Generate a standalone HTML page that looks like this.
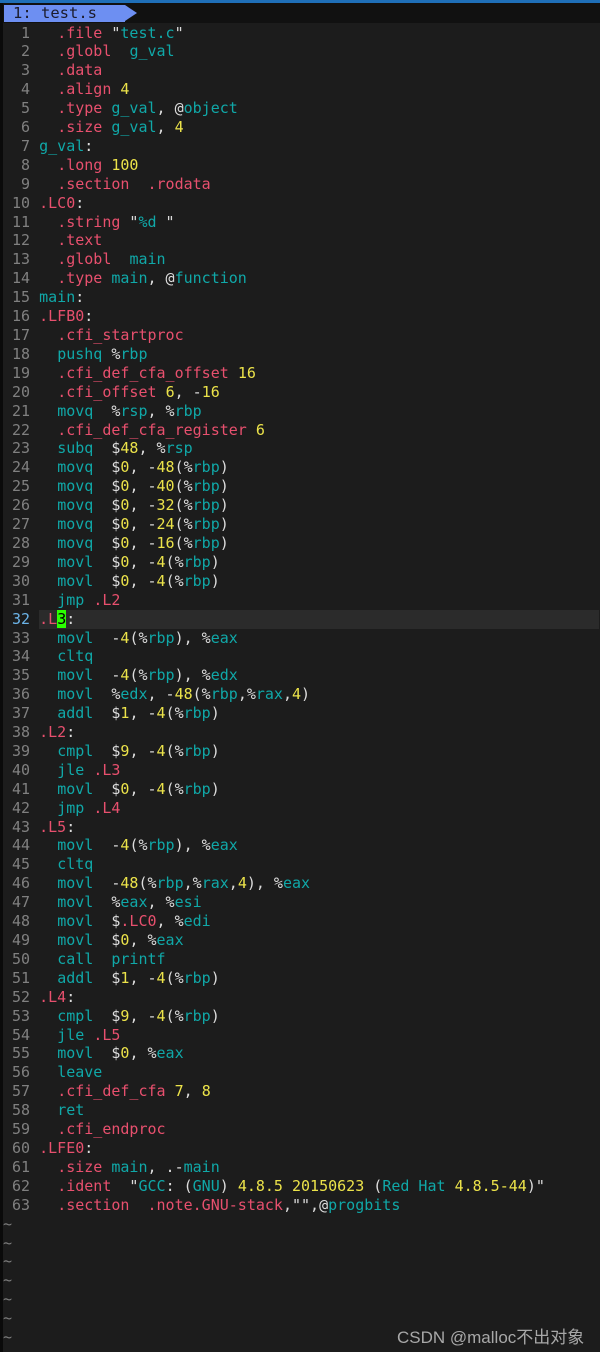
<!DOCTYPE html>
<html><head><meta charset="utf-8"><style>
html,body{margin:0;padding:0;}
body{width:600px;height:1352px;background:#1c1c1c;position:relative;overflow:hidden;}
.top{position:absolute;left:0;top:0;width:600px;height:3px;background:#1f6fb8;}
.bar{position:absolute;left:0;top:3px;width:600px;height:20px;background:#111;}
.tab{position:absolute;left:4px;top:5px;height:17px;width:112px;background:#6d8ff2;color:#1c1c2c;font:15.5px/17px "DejaVu Sans Mono",monospace;padding-left:9px;}
.tab:after{content:"";position:absolute;right:-12px;top:0;border-left:12px solid #6d8ff2;border-top:8.5px solid transparent;border-bottom:8.5px solid transparent;}
.lb{position:absolute;left:0;top:3px;width:3px;height:1349px;background:#0a0a0a;}
pre{position:absolute;left:3px;top:23.5px;margin:0;font:15px/18.9px "DejaVu Sans Mono",monospace;color:#dcdcdc;white-space:pre;}
.n{color:#808080}.cn{color:#6cb4e8}
.r{color:#e8506e}.c{color:#10a8a8}.y{color:#ece34a}
.cur{background:#2b2b2b;display:inline-block;width:560px}
.cu{background:#2bff00;color:#000}
.t{color:#7d7d7d}
.wm{position:absolute;left:397px;top:1323px;color:#a8a8a8;font:17px "Liberation Sans","Noto Sans CJK SC",sans-serif;}
</style></head><body>
<div class="top"></div><div class="bar"></div><div class="lb"></div>
<div class="tab">1: test.s</div>
<pre><span class="n">  1 </span>  <span class="r">.file</span> "<span class="c">test.c</span>"
<span class="n">  2 </span>  <span class="r">.globl</span>  <span class="c">g_val</span>
<span class="n">  3 </span>  <span class="r">.data</span>
<span class="n">  4 </span>  <span class="r">.align</span> <span class="y">4</span>
<span class="n">  5 </span>  <span class="r">.type</span> <span class="c">g_val</span>, @<span class="c">object</span>
<span class="n">  6 </span>  <span class="r">.size</span> <span class="c">g_val</span>, <span class="y">4</span>
<span class="n">  7 </span><span class="c">g_val</span>:
<span class="n">  8 </span>  <span class="r">.long</span> <span class="y">100</span>
<span class="n">  9 </span>  <span class="r">.section</span>  <span class="r">.rodata</span>
<span class="n"> 10 </span><span class="r">.LC0</span>:
<span class="n"> 11 </span>  <span class="r">.string</span> "<span class="c">%d</span> "
<span class="n"> 12 </span>  <span class="r">.text</span>
<span class="n"> 13 </span>  <span class="r">.globl</span>  <span class="c">main</span>
<span class="n"> 14 </span>  <span class="r">.type</span> <span class="c">main</span>, @<span class="c">function</span>
<span class="n"> 15 </span><span class="c">main</span>:
<span class="n"> 16 </span><span class="r">.LFB0</span>:
<span class="n"> 17 </span>  <span class="r">.cfi_startproc</span>
<span class="n"> 18 </span>  <span class="c">pushq</span> %<span class="c">rbp</span>
<span class="n"> 19 </span>  <span class="r">.cfi_def_cfa_offset</span> <span class="y">16</span>
<span class="n"> 20 </span>  <span class="r">.cfi_offset</span> <span class="y">6</span>, -<span class="y">16</span>
<span class="n"> 21 </span>  <span class="c">movq</span>  %<span class="c">rsp</span>, %<span class="c">rbp</span>
<span class="n"> 22 </span>  <span class="r">.cfi_def_cfa_register</span> <span class="y">6</span>
<span class="n"> 23 </span>  <span class="c">subq</span>  $<span class="y">48</span>, %<span class="c">rsp</span>
<span class="n"> 24 </span>  <span class="c">movq</span>  $<span class="y">0</span>, -<span class="y">48</span>(%<span class="c">rbp</span>)
<span class="n"> 25 </span>  <span class="c">movq</span>  $<span class="y">0</span>, -<span class="y">40</span>(%<span class="c">rbp</span>)
<span class="n"> 26 </span>  <span class="c">movq</span>  $<span class="y">0</span>, -<span class="y">32</span>(%<span class="c">rbp</span>)
<span class="n"> 27 </span>  <span class="c">movq</span>  $<span class="y">0</span>, -<span class="y">24</span>(%<span class="c">rbp</span>)
<span class="n"> 28 </span>  <span class="c">movq</span>  $<span class="y">0</span>, -<span class="y">16</span>(%<span class="c">rbp</span>)
<span class="n"> 29 </span>  <span class="c">movl</span>  $<span class="y">0</span>, -<span class="y">4</span>(%<span class="c">rbp</span>)
<span class="n"> 30 </span>  <span class="c">movl</span>  $<span class="y">0</span>, -<span class="y">4</span>(%<span class="c">rbp</span>)
<span class="n"> 31 </span>  <span class="c">jmp</span> <span class="r">.L2</span>
<span class="cn"> 32 </span><span class="cur"><span class="r">.L</span><span class="cu">3</span>:</span>
<span class="n"> 33 </span>  <span class="c">movl</span>  -<span class="y">4</span>(%<span class="c">rbp</span>), %<span class="c">eax</span>
<span class="n"> 34 </span>  <span class="c">cltq</span>
<span class="n"> 35 </span>  <span class="c">movl</span>  -<span class="y">4</span>(%<span class="c">rbp</span>), %<span class="c">edx</span>
<span class="n"> 36 </span>  <span class="c">movl</span>  %<span class="c">edx</span>, -<span class="y">48</span>(%<span class="c">rbp</span>,%<span class="c">rax</span>,<span class="y">4</span>)
<span class="n"> 37 </span>  <span class="c">addl</span>  $<span class="y">1</span>, -<span class="y">4</span>(%<span class="c">rbp</span>)
<span class="n"> 38 </span><span class="r">.L2</span>:
<span class="n"> 39 </span>  <span class="c">cmpl</span>  $<span class="y">9</span>, -<span class="y">4</span>(%<span class="c">rbp</span>)
<span class="n"> 40 </span>  <span class="c">jle</span> <span class="r">.L3</span>
<span class="n"> 41 </span>  <span class="c">movl</span>  $<span class="y">0</span>, -<span class="y">4</span>(%<span class="c">rbp</span>)
<span class="n"> 42 </span>  <span class="c">jmp</span> <span class="r">.L4</span>
<span class="n"> 43 </span><span class="r">.L5</span>:
<span class="n"> 44 </span>  <span class="c">movl</span>  -<span class="y">4</span>(%<span class="c">rbp</span>), %<span class="c">eax</span>
<span class="n"> 45 </span>  <span class="c">cltq</span>
<span class="n"> 46 </span>  <span class="c">movl</span>  -<span class="y">48</span>(%<span class="c">rbp</span>,%<span class="c">rax</span>,<span class="y">4</span>), %<span class="c">eax</span>
<span class="n"> 47 </span>  <span class="c">movl</span>  %<span class="c">eax</span>, %<span class="c">esi</span>
<span class="n"> 48 </span>  <span class="c">movl</span>  $<span class="r">.LC0</span>, %<span class="c">edi</span>
<span class="n"> 49 </span>  <span class="c">movl</span>  $<span class="y">0</span>, %<span class="c">eax</span>
<span class="n"> 50 </span>  <span class="c">call</span>  <span class="c">printf</span>
<span class="n"> 51 </span>  <span class="c">addl</span>  $<span class="y">1</span>, -<span class="y">4</span>(%<span class="c">rbp</span>)
<span class="n"> 52 </span><span class="r">.L4</span>:
<span class="n"> 53 </span>  <span class="c">cmpl</span>  $<span class="y">9</span>, -<span class="y">4</span>(%<span class="c">rbp</span>)
<span class="n"> 54 </span>  <span class="c">jle</span> <span class="r">.L5</span>
<span class="n"> 55 </span>  <span class="c">movl</span>  $<span class="y">0</span>, %<span class="c">eax</span>
<span class="n"> 56 </span>  <span class="c">leave</span>
<span class="n"> 57 </span>  <span class="r">.cfi_def_cfa</span> <span class="y">7</span>, <span class="y">8</span>
<span class="n"> 58 </span>  <span class="c">ret</span>
<span class="n"> 59 </span>  <span class="r">.cfi_endproc</span>
<span class="n"> 60 </span><span class="r">.LFE0</span>:
<span class="n"> 61 </span>  <span class="r">.size</span> <span class="c">main</span>, .-<span class="c">main</span>
<span class="n"> 62 </span>  <span class="r">.ident</span>  "<span class="c">GCC</span>: (<span class="c">GNU</span>) <span class="y">4.8.5 20150623</span> (<span class="c">Red Hat</span> <span class="y">4.8.5-44</span>)"
<span class="n"> 63 </span>  <span class="r">.section</span>  <span class="r">.note.GNU-stack</span>,"",@<span class="c">progbits</span>
<span class="t">~</span>
<span class="t">~</span>
<span class="t">~</span>
<span class="t">~</span>
<span class="t">~</span>
<span class="t">~</span>
<span class="t">~</span></pre>
<div class="wm">CSDN @malloc不出对象</div>
</body></html>
